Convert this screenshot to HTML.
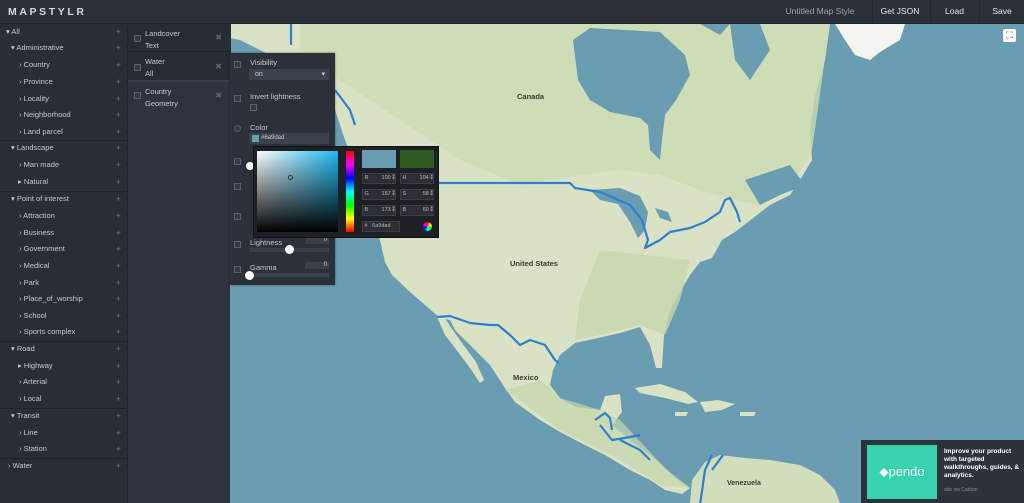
<!DOCTYPE html>
<html><head><meta charset="utf-8"><style>
*{margin:0;padding:0;box-sizing:border-box}
body{width:1024px;height:503px;overflow:hidden;background:#6a9db2;font-family:"Liberation Sans",sans-serif;font-size:8px;color:#c9ccd2;position:relative}
.hdr{position:absolute;left:0;top:0;width:1024px;height:24px;background:#2b3039;border-bottom:1px solid #1e2228}
.logo{position:absolute;left:8px;top:6px;font-size:10.5px;letter-spacing:2.6px;color:#d5d8dd;font-weight:bold}
.hb{position:absolute;top:0;height:24px;line-height:23px;font-size:8.5px;color:#e5e7ea;text-align:center;border-left:1px solid #22262d}
.side{position:absolute;left:0;top:24px;width:127px;height:479px;background:#282d36}
.row{position:absolute;left:0;width:127px;height:16px;line-height:16px;font-size:7.5px;color:#c5c9cf}
.row .p{position:absolute;right:6px;top:0;color:#6b717b;font-size:9px}
.div{position:absolute;left:0;width:127px;height:1px;background:#1d2128}
.mid{position:absolute;left:127px;top:24px;width:103px;height:479px;background:#2e333d;border-left:1px solid #1f232a}
.it{position:absolute;left:0;width:103px;font-size:7.5px;line-height:12px;color:#c5c9cf;padding-left:17px}
.cb{position:absolute;width:7px;height:7px;border:1px solid #5a606a;background:#353a44}
.x{position:absolute;right:8px;color:#5e636c;font-size:8px}
.pan{position:absolute;left:230px;top:53px;width:105px;height:232px;background:#2b3039;box-shadow:0 0 2px rgba(0,0,0,.5)}
.lbl{position:absolute;left:20px;font-size:7.5px;color:#c5c9cf}
.cp{position:absolute;left:253px;top:146px;width:186px;height:92px;background:#1d2024;border:1px solid #101214}
.f{position:absolute;height:11px;background:#2b2f35;border:1px solid #3a3f46;font-size:5.5px;color:#bbb;line-height:9px}
.ml{position:absolute;font-size:7.5px;font-weight:bold;color:#3a3a3a}
</style></head><body>

<svg style="position:absolute;left:0;top:0" width="1024" height="503">
<path fill="#d9e2c4" d="M230,24 L830,24 L825,60 L815,95 L810,130 L812,160 L800,180 L790,195 L770,205 L748,222 L735,232 L722,240 L712,258 L700,262 L690,275 L680,292 L670,310 L664,335 L662,368 L656,368 L650,345 L640,327 L620,333 L598,338 L575,343 L560,355 L553,370 L550,385 L560,398 L575,407 L600,410 L605,396 L620,394 L622,412 L612,425 L630,440 L650,455 L665,468 L675,478 L690,488 L682,494 L665,490 L650,480 L630,470 L605,455 L585,445 L560,432 L540,420 L515,402 L505,388 L490,365 L470,345 L455,330 L450,320 L440,318 L425,305 L410,292 L392,275 L385,262 L380,240 L370,215 L362,190 L355,165 L345,140 L335,110 L320,90 L300,70 L270,55 L240,40 L230,38 Z"/>
<path fill="#d9e2c4" d="M437,317 L445,335 L458,352 L470,368 L480,383 L484,380 L476,362 L462,343 L450,326 L445,318 Z"/>
<path fill="#ccdcb4" d="M450,24 L830,24 L812,150 L790,190 L760,205 L735,200 L700,190 L660,175 L620,170 L580,175 L520,185 L460,160 L400,120 L340,80 L300,60 L300,24 Z" opacity=".8"/>
<path fill="#c6d7ae" d="M600,250 L690,260 L680,300 L665,335 L640,325 L600,335 L575,340 L580,300 Z" opacity=".8"/>
<path fill="#c6d7ae" d="M505,390 L560,430 L620,460 L660,485 L690,488 L665,468 L620,420 L600,410 L560,398 L540,380 Z" opacity=".7"/>
<path fill="#6a9db2" d="M573,40 L590,28 L625,30 L660,32 L685,55 L690,75 L676,100 L665,115 L662,140 L660,160 L650,150 L648,125 L640,118 L610,112 L590,100 L578,80 Z"/>
<path fill="#6a9db2" d="M730,24 L760,24 L770,50 L750,80 L735,60 Z"/>
<path fill="#6a9db2" d="M700,24 L730,24 L720,35 Z"/>
<path fill="#6a9db2" d="M590,190 L620,188 L640,196 L648,212 L645,230 L638,238 L630,222 L618,204 L600,200 Z"/>
<path fill="#6a9db2" d="M655,208 L668,212 L672,222 L660,218 Z"/>
<path fill="#6a9db2" d="M745,180 L790,165 L805,185 L780,195 L760,205 Z"/>
<path fill="#f3f3f0" d="M835,24 L905,24 L900,40 L880,52 L870,60 L855,55 L845,40 Z"/>
<path fill="#d9e2c4" d="M635,388 L660,384 L685,392 L698,402 L688,404 L665,398 L640,393 Z"/>
<path fill="#d9e2c4" d="M700,402 L718,400 L735,404 L722,410 L705,412 Z"/>
<path fill="#d9e2c4" d="M740,412 L756,412 L754,416 L740,416 Z"/>
<path fill="#d9e2c4" d="M675,412 L688,412 L686,416 L675,416 Z"/>
<path fill="#d2ddbb" d="M690,503 L692,480 L705,462 L720,455 L745,458 L770,460 L800,465 L820,475 L835,490 L840,503 Z"/>
<g fill="none" stroke="#2f7fd0" stroke-width="2.2" stroke-linejoin="round">
<path d="M291,24 L291,45"/>
<path d="M335,90 L350,110 L355,125"/>
<path d="M335,183 L570,183 L575,188 L600,192 L630,205 L642,220 L648,240 L645,248 L660,240 L670,232 L690,228 L705,222 L720,212 L725,200 L730,198 L737,212 L740,222"/>
<path d="M437,317 L450,316 L470,323 L490,325 L498,325 L510,335 L520,345 L530,340 L545,345 L555,360 L559,363"/>
<path d="M595,420 L605,413 L610,418 L612,430 M600,425 L612,440 L625,438 L640,435 M620,440 L640,450 L650,460 M700,505 L705,470 L712,455 M723,455 L712,470"/>
</g>
</svg>

<div style="position:absolute;left:1003px;top:29px;width:13px;height:13px;background:#fff;border-radius:2px;font-size:9px;color:#333;text-align:center;line-height:12px">⛶</div>

<div style="position:absolute;left:861px;top:440px;width:163px;height:63px;background:#2d323b">
 <div style="position:absolute;left:6px;top:5px;width:70px;height:54px;background:#37d2ae;color:#fff;font-size:13px;line-height:54px;text-align:center">⬥pendo</div>
 <div style="position:absolute;left:83px;top:8px;width:78px;font-size:6.5px;line-height:8px;color:#fff;font-weight:bold">Improve your product with targeted walkthroughs, guides, &amp; analytics.</div>
 <div style="position:absolute;left:83px;top:47px;font-size:5px;color:#888">ads via Carbon</div>
</div>

<div class="hdr">
 <div class="logo">MAPSTYLR</div>
 <div class="hb" style="left:770px;width:100px;color:#9ea3ab;border:none">Untitled Map Style</div>
 <div class="hb" style="left:872px;width:55px">Get JSON</div>
 <div class="hb" style="left:930px;width:48px">Load</div>
 <div class="hb" style="left:979px;width:45px">Save</div>
</div>

<div class="side">
 <div class="row" style="top:0"><span style="padding-left:6px">▾ All</span><span class="p">+</span></div>
 <div class="row" style="top:16px"><span style="padding-left:11px">▾ Administrative</span><span class="p">+</span></div>
 <div class="row" style="top:33px"><span style="padding-left:19px">› Country</span><span class="p">+</span></div>
 <div class="row" style="top:50px"><span style="padding-left:19px">› Province</span><span class="p">+</span></div>
 <div class="row" style="top:67px"><span style="padding-left:19px">› Locality</span><span class="p">+</span></div>
 <div class="row" style="top:83px"><span style="padding-left:19px">› Neighborhood</span><span class="p">+</span></div>
 <div class="row" style="top:100px"><span style="padding-left:19px">› Land parcel</span><span class="p">+</span></div>
 <div class="div" style="top:116px"></div>
 <div class="row" style="top:116px"><span style="padding-left:11px">▾ Landscape</span><span class="p">+</span></div>
 <div class="row" style="top:133px"><span style="padding-left:19px">› Man made</span><span class="p">+</span></div>
 <div class="row" style="top:150px"><span style="padding-left:18px">▸ Natural</span><span class="p">+</span></div>
 <div class="div" style="top:167px"></div>
 <div class="row" style="top:167px"><span style="padding-left:11px">▾ Point of interest</span><span class="p">+</span></div>
 <div class="row" style="top:184px"><span style="padding-left:19px">› Attraction</span><span class="p">+</span></div>
 <div class="row" style="top:201px"><span style="padding-left:19px">› Business</span><span class="p">+</span></div>
 <div class="row" style="top:217px"><span style="padding-left:19px">› Government</span><span class="p">+</span></div>
 <div class="row" style="top:234px"><span style="padding-left:19px">› Medical</span><span class="p">+</span></div>
 <div class="row" style="top:251px"><span style="padding-left:19px">› Park</span><span class="p">+</span></div>
 <div class="row" style="top:267px"><span style="padding-left:19px">› Place_of_worship</span><span class="p">+</span></div>
 <div class="row" style="top:284px"><span style="padding-left:19px">› School</span><span class="p">+</span></div>
 <div class="row" style="top:300px"><span style="padding-left:19px">› Sports complex</span><span class="p">+</span></div>
 <div class="div" style="top:317px"></div>
 <div class="row" style="top:317px"><span style="padding-left:11px">▾ Road</span><span class="p">+</span></div>
 <div class="row" style="top:334px"><span style="padding-left:18px">▸ Highway</span><span class="p">+</span></div>
 <div class="row" style="top:350px"><span style="padding-left:19px">› Arterial</span><span class="p">+</span></div>
 <div class="row" style="top:367px"><span style="padding-left:19px">› Local</span><span class="p">+</span></div>
 <div class="div" style="top:384px"></div>
 <div class="row" style="top:384px"><span style="padding-left:11px">▾ Transit</span><span class="p">+</span></div>
 <div class="row" style="top:401px"><span style="padding-left:19px">› Line</span><span class="p">+</span></div>
 <div class="row" style="top:417px"><span style="padding-left:19px">› Station</span><span class="p">+</span></div>
 <div class="div" style="top:434px"></div>
 <div class="row" style="top:434px"><span style="padding-left:8px">› Water</span><span class="p">+</span></div>
</div>

<div class="mid">
 <div style="position:absolute;left:0;top:0;width:103px;height:56px;background:#272b34"></div>
 <div style="position:absolute;left:0;top:27px;width:103px;height:1px;background:#1f232a"></div>
 <div style="position:absolute;left:0;top:56px;width:103px;height:2px;background:#3a3f49"></div>
 <div class="it" style="top:4px">Landcover<br>Text</div><div class="cb" style="left:6px;top:11px"></div><div class="x" style="top:9px">✖</div>
 <div class="it" style="top:32px">Water<br>All</div><div class="cb" style="left:6px;top:40px"></div><div class="x" style="top:38px">✖</div>
 <div class="it" style="top:62px">Country<br>Geometry</div><div class="cb" style="left:6px;top:68px"></div><div class="x" style="top:67px">✖</div>
</div>

<div class="pan">
 <div class="cb" style="left:4px;top:8px"></div><div class="lbl" style="top:5px">Visibility</div>
 <div style="position:absolute;left:19px;top:16px;width:80px;height:11px;background:#3c424c;font-size:7px;padding-left:6px;line-height:11px">on<span style="position:absolute;right:4px">▾</span></div>
 <div class="cb" style="left:4px;top:42px"></div><div class="lbl" style="top:39px">Invert lightness</div>
 <div class="cb" style="left:20px;top:51px"></div>
 <div class="cb" style="left:4px;top:72px;border-radius:50%"></div><div class="lbl" style="top:70px">Color</div>
 <div style="position:absolute;left:19px;top:80px;width:80px;height:11px;background:#3c424c;font-size:6px;padding-left:12px;line-height:11px">#6a9dad</div>
 <div style="position:absolute;left:22px;top:82px;width:7px;height:7px;background:#6a9db2"></div>
 <div class="cb" style="left:4px;top:105px"></div>
 <div class="cb" style="left:4px;top:130px"></div>
 <div class="cb" style="left:4px;top:160px"></div>
 <div style="position:absolute;left:16px;top:109px;width:8px;height:8px;border-radius:50%;background:#fff"></div>
 <div class="cb" style="left:4px;top:188px"></div><div class="lbl" style="top:185px">Lightness</div>
 <div style="position:absolute;left:75px;top:184px;width:24px;height:7px;background:#3a3f48;font-size:6px;text-align:right;padding-right:2px;line-height:7px">0</div>
 <div style="position:absolute;left:20px;top:195px;width:79px;height:4px;background:#3a3f48"></div>
 <div style="position:absolute;left:55px;top:192px;width:9px;height:9px;border-radius:50%;background:#fff"></div>
 <div class="cb" style="left:4px;top:213px"></div><div class="lbl" style="top:210px">Gamma</div>
 <div style="position:absolute;left:75px;top:209px;width:24px;height:7px;background:#3a3f48;font-size:6px;text-align:right;padding-right:2px;line-height:7px">0</div>
 <div style="position:absolute;left:20px;top:220px;width:79px;height:4px;background:#3a3f48"></div>
 <div style="position:absolute;left:15px;top:218px;width:9px;height:9px;border-radius:50%;background:#fff"></div>
</div>

<div class="cp">
 <div style="position:absolute;left:3px;top:4px;width:81px;height:81px;background:linear-gradient(to top,#000,rgba(0,0,0,0)),linear-gradient(to right,#fff,#1cb8f0)"></div>
 <div style="position:absolute;left:34px;top:28px;width:5px;height:5px;border:1px solid #333;border-radius:50%"></div>
 <div style="position:absolute;left:92px;top:4px;width:8px;height:81px;background:linear-gradient(#f00,#f0f,#00f,#0ff,#0f0,#ff0,#f00)"></div>
 <div style="position:absolute;left:108px;top:3px;width:34px;height:18px;background:#6a9db2"></div>
 <div style="position:absolute;left:146px;top:3px;width:34px;height:18px;background:#2c5a1f"></div>
 <div class="f" style="left:108px;top:26px;width:34px">&nbsp;R<span style="float:right">100 ⁑</span></div>
 <div class="f" style="left:146px;top:26px;width:34px">&nbsp;H<span style="float:right">104 ⁑</span></div>
 <div class="f" style="left:108px;top:42px;width:34px">&nbsp;G<span style="float:right">157 ⁑</span></div>
 <div class="f" style="left:146px;top:42px;width:34px">&nbsp;S<span style="float:right">58 ⁑</span></div>
 <div class="f" style="left:108px;top:58px;width:34px">&nbsp;B<span style="float:right">173 ⁑</span></div>
 <div class="f" style="left:146px;top:58px;width:34px">&nbsp;B<span style="float:right">60 ⁑</span></div>
 <div class="f" style="left:108px;top:74px;width:38px">&nbsp;#&nbsp;&nbsp;&nbsp;6a9dad</div>
 <div style="position:absolute;left:169px;top:75px;width:9px;height:9px;border-radius:50%;background:conic-gradient(#f00,#ff0,#0f0,#0ff,#00f,#f0f,#f00)"></div>
</div>

<div class="ml" style="left:517px;top:92px">Canada</div>
<div class="ml" style="left:510px;top:259px">United States</div>
<div class="ml" style="left:513px;top:373px">Mexico</div>
<div class="ml" style="left:727px;top:480px;font-size:7px">Venezuela</div>
</body></html>
